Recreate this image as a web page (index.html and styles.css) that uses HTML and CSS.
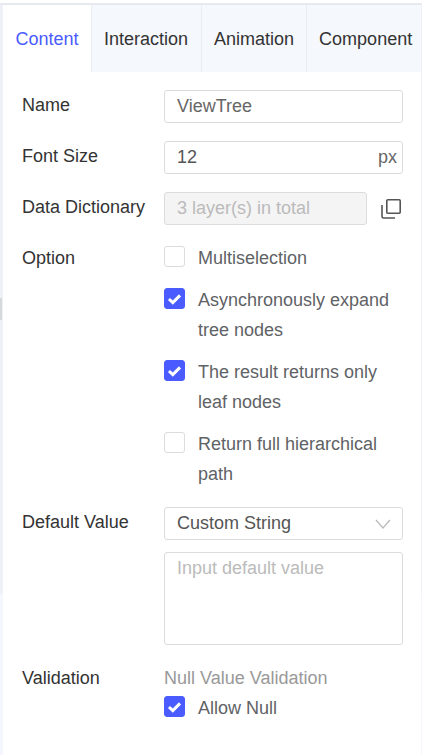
FILE: index.html
```html
<!DOCTYPE html>
<html lang="en">
<head>
    <meta charset="UTF-8">
    <title>ViewTree Settings</title>
    <link rel="stylesheet" href="styles.css">
</head>
<body>
    <div class="page">
        <div class="top-line"></div>
        <div class="handle"></div>
        <div class="panel">
            <div class="tabs">
                <div class="tab active">Content</div>
                <div class="tab">Interaction</div>
                <div class="tab">Animation</div>
                <div class="tab">Component</div>
            </div>
            <div class="form">
                <div class="row">
                    <div class="label">Name</div>
                    <div class="field"><div class="input">ViewTree</div></div>
                </div>
                <div class="row">
                    <div class="label">Font Size</div>
                    <div class="field">
                        <div class="input with-unit">12<span class="unit">px</span></div>
                    </div>
                </div>
                <div class="row">
                    <div class="label">Data Dictionary</div>
                    <div class="field field-inline">
                        <div class="input disabled">3 layer(s) in total</div>
                        <svg class="copy-icon" width="20" height="20" viewBox="0 0 20 20" fill="none" stroke="#555" stroke-width="1.6">
                            <rect x="5.8" y="0.8" width="13.4" height="13.4" rx="1"/>
                            <path d="M1 6v11.5a1.5 1.5 0 0 0 1.5 1.5H14"/>
                        </svg>
                    </div>
                </div>
                <div class="row">
                    <div class="label">Option</div>
                    <div class="field">
                        <div class="check-row">
                            <span class="box"></span>
                            <span class="check-text">Multiselection</span>
                        </div>
                        <div class="check-row">
                            <span class="box checked"><svg width="15" height="12" viewBox="0 0 15 12"><path d="M2 6l3.8 3.6L13 2.4" fill="none" stroke="#fff" stroke-width="3"/></svg></span>
                            <span class="check-text">Asynchronously expand tree nodes</span>
                        </div>
                        <div class="check-row">
                            <span class="box checked"><svg width="15" height="12" viewBox="0 0 15 12"><path d="M2 6l3.8 3.6L13 2.4" fill="none" stroke="#fff" stroke-width="3"/></svg></span>
                            <span class="check-text">The result returns only leaf nodes</span>
                        </div>
                        <div class="check-row">
                            <span class="box"></span>
                            <span class="check-text">Return full hierarchical path</span>
                        </div>
                    </div>
                </div>
                <div class="row">
                    <div class="label">Default Value</div>
                    <div class="field">
                        <div class="input select">Custom String
                            <svg class="arrow" width="16" height="10" viewBox="0 0 16 10"><path d="M1 1l7 8 7-8" fill="none" stroke="#bbb" stroke-width="1.3"/></svg>
                        </div>
                        <div class="textarea">Input default value</div>
                    </div>
                </div>
                <div class="row">
                    <div class="label">Validation</div>
                    <div class="field">
                        <div class="sub-label">Null Value Validation</div>
                        <div class="check-row">
                            <span class="box checked"><svg width="15" height="12" viewBox="0 0 15 12"><path d="M2 6l3.8 3.6L13 2.4" fill="none" stroke="#fff" stroke-width="3"/></svg></span>
                            <span class="check-text">Allow Null</span>
                        </div>
                    </div>
                </div>
            </div>
        </div>
    </div>
</body>
</html>
```

FILE: styles.css
```css
html, body {
    margin: 0;
    padding: 0;
}
body {
    font-family: "Liberation Sans", Arial, sans-serif;
    font-size: 18px;
    color: #333;
    background-color: #fff;
}
.page {
    position: relative;
    width: 422px;
    height: 755px;
    overflow: hidden;
    box-sizing: border-box;
    padding: 5px 1px 0 3px;
    background: linear-gradient(#fff 3px, #eef1f6 3px, #eef1f6 594px, #f5f7fe 594px);
}
.top-line {
    position: absolute;
    left: 0;
    right: 0;
    top: 3px;
    height: 2px;
    background-color: #e6e9ee;
}
.handle {
    position: absolute;
    left: 0;
    top: 298px;
    width: 2px;
    height: 22px;
    background-color: #d6d8dc;
}
.panel {
    height: 750px;
    background-color: #fff;
}
.tabs {
    display: flex;
    height: 67px;
    overflow: hidden;
    background-color: #f5f8fc;
}
.tab {
    display: flex;
    flex-shrink: 0;
    align-items: center;
    padding: 1px 12px 0;
    border-right: 1px solid #e9edf2;
    white-space: nowrap;
}
.tab:nth-child(2) {
    padding-right: 13px;
}
.tab:last-child {
    border-right: none;
}
.tab.active {
    width: 89px;
    box-sizing: border-box;
    justify-content: center;
    padding: 1px 0 0;
    color: #4a5bff;
    background-color: #fff;
}
.form {
    padding: 18px 18px 0 19px;
}
.row {
    display: flex;
    margin-bottom: 18px;
}
.label {
    width: 142px;
    flex-shrink: 0;
    line-height: 30px;
    height: 30px;
    color: #333;
}
.field {
    flex: 1;
    min-width: 0;
}
.field-inline {
    display: flex;
    align-items: center;
}
.input {
    position: relative;
    box-sizing: border-box;
    height: 33px;
    line-height: 31px;
    padding: 0 12px;
    border: 1px solid #dcdcdc;
    border-radius: 3px;
    color: #666;
}
.with-unit {
    color: #555;
}
.unit {
    position: absolute;
    right: 5px;
    top: 0;
    color: #666;
}
.disabled {
    width: 203px;
    color: #bbb;
    background-color: #f4f4f4;
}
.copy-icon {
    margin-left: 14px;
}
.select {
    color: #555;
}
.arrow {
    position: absolute;
    right: 11px;
    top: 11px;
}
.textarea {
    box-sizing: border-box;
    height: 93px;
    margin-top: 12px;
    padding: 0 12px;
    line-height: 31px;
    border: 1px solid #dcdcdc;
    border-radius: 3px;
    color: #bbb;
}
.check-row {
    display: flex;
    margin-bottom: 12px;
    line-height: 30px;
    color: #606266;
}
.check-row:last-child {
    margin-bottom: 0;
}
.box {
    width: 21px;
    height: 21px;
    flex-shrink: 0;
    box-sizing: border-box;
    margin: 3px 13px 0 0;
    display: flex;
    align-items: center;
    justify-content: center;
    border: 1px solid #dcdcdc;
    border-radius: 3px;
    background-color: #fff;
}
.box.checked {
    border-color: #4a5bff;
    background-color: #4a5bff;
}
.sub-label {
    height: 30px;
    line-height: 30px;
    color: #999;
}
```
